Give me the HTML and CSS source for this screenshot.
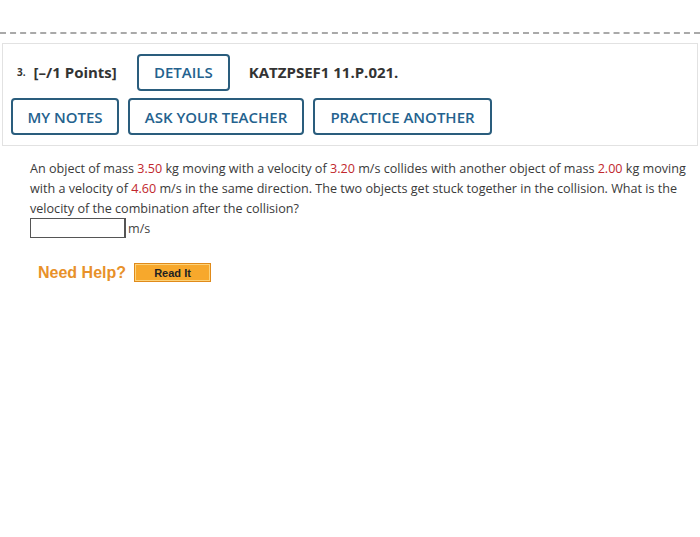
FILE: index.html
```html
<!DOCTYPE html>
<html>
<head>
<meta charset="utf-8">
<link rel="stylesheet" href="styles.css">
</head>
<body>
<div class="dash"></div>
<div class="qbox">
  <div class="row1">
    <span class="num">3.</span>
    <span class="pts">[–/1 Points]</span>
    <button class="btn details">DETAILS</button>
    <span class="code">KATZPSEF1 11.P.021.</span>
  </div>
  <div class="row2">
    <button class="btn notes">MY NOTES</button>
    <button class="btn ask">ASK YOUR TEACHER</button>
    <button class="btn practice">PRACTICE ANOTHER</button>
  </div>
</div>
<div class="body">
  <p class="q">An object of mass <span class="red">3.50</span> kg moving with a velocity of <span class="red">3.20</span> m/s collides with another object of mass <span class="red">2.00</span> kg moving with a velocity of <span class="red">4.60</span> m/s in the same direction. The two objects get stuck together in the collision. What is the velocity of the combination after the collision?</p>
  <div class="ans"><span class="inp"></span><span class="unit">m/s</span></div>
  <div class="help"><span class="need">Need Help?</span><span class="readit">Read It</span></div>
</div>
</body>
</html>
```
FILE: styles.css
```css
html, body { margin: 0; padding: 0; background: #fff; }
body { font-family: "Open Sans", "Noto Sans", sans-serif; color: #333; width: 700px; height: 537px; }
.dash { margin-top: 32px; height: 0; border-top: 2px dashed #a9a9a9; }
.qbox { margin: 9px 2px 0 2px; border: 1px solid #e2e2e2; height: 103px; box-sizing: border-box; padding: 9px 0 0 9px; }
.row1 { display: flex; align-items: center; height: 38px; }
.num { font-size: 10px; font-weight: 700; margin-left: 5px; color: #333; }
.pts { font-size: 15px; font-weight: 700; margin-left: 8px; color: #333; }
.btn { font-family: "Open Sans", "Noto Sans", sans-serif; font-size: 15px; font-weight: 600; color: #24628e; background: #fff; border: 2px solid #2a5d7d; border-radius: 4px; height: 37px; padding: 0; box-sizing: border-box; cursor: pointer; }
.details { margin-left: 20px; width: 93px; }
.code { font-size: 15px; font-weight: 700; margin-left: 19px; color: #333; }
.row2 { display: flex; gap: 9px; margin-top: 7px; margin-left: -1px; }
.notes { width: 108px; }
.ask { width: 176px; }
.practice { width: 179px; }
.body { padding: 13px 0 0 30px; }
.q { margin: 0; font-size: 12.6px; line-height: 20px; color: #3a3a3a; width: 662px; }
.red { color: #c1272d; }
.ans { display: flex; align-items: center; height: 20px; margin-top: -1px; }
.inp { display: inline-block; width: 93px; height: 18px; border: 1px solid #555; border-right-width: 2px; box-sizing: content-box; }
.unit { font-size: 12.6px; margin-left: 2px; color: #444; }
.help { display: flex; align-items: center; margin-top: 25px; margin-left: 8px; }
.need { font-family: "Liberation Sans", Arial, sans-serif; font-weight: 700; font-size: 16px; color: #e8912a; }
.readit { margin-left: 8px; width: 77px; height: 19px; box-sizing: border-box; background: #f7a82c; border: 1px solid #e08a1a; box-shadow: inset 0 0 0 1px #fcd27a; font-family: "Liberation Sans", Arial, sans-serif; font-weight: 700; font-size: 11px; color: #222; display: flex; align-items: center; justify-content: center; }
```
